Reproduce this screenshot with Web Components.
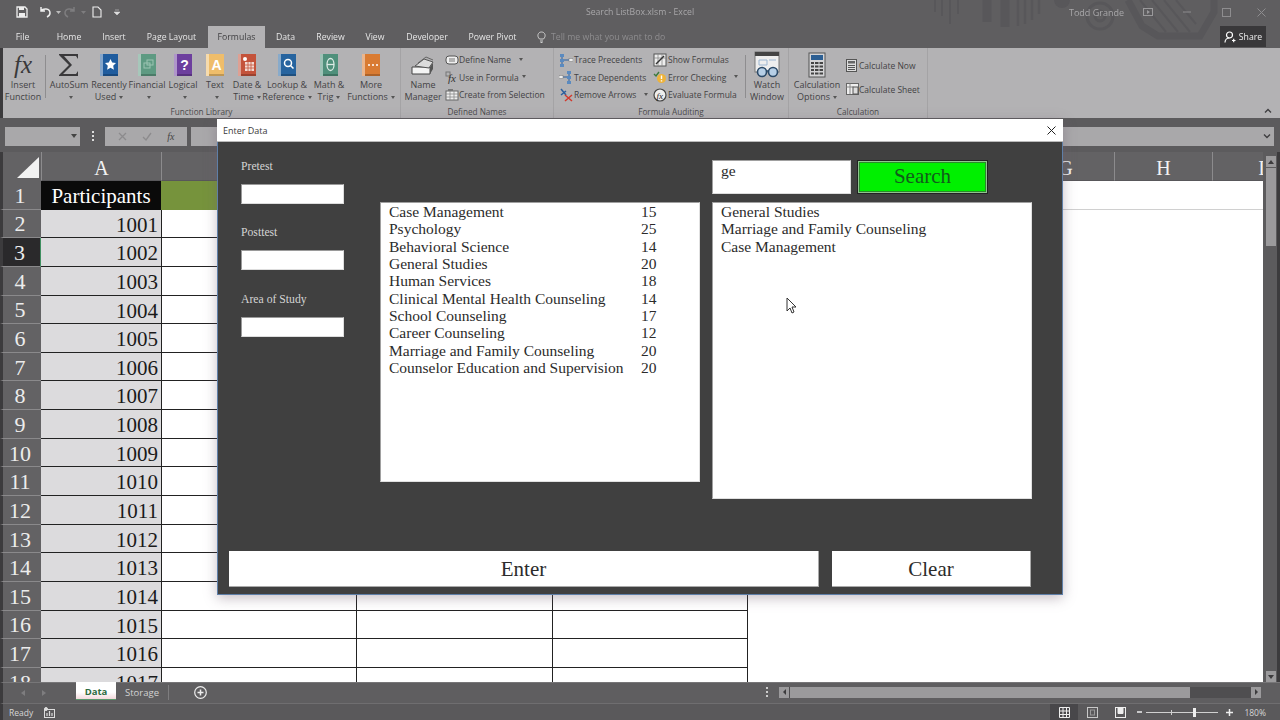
<!DOCTYPE html>
<html>
<head>
<meta charset="utf-8">
<title>Search ListBox.xlsm - Excel</title>
<style>
    html, body { margin: 0; height: 720px; overflow: hidden; }
    body {
        position: relative;
        display: flex;
        flex-direction: column;
        width: 1280px;
        background: #5c5b5d;
        font-family: "Open Sans", "Liberation Sans", sans-serif;
        filter: blur(.35px);
    }
    .cursor { position: absolute; left: 786px; top: 297px; }
</style>
</head>
<body>
<xl-titlebar></xl-titlebar>
<xl-ribbon></xl-ribbon>
<xl-formula-bar></xl-formula-bar>
<xl-sheet></xl-sheet>
<xl-sheet-tabs></xl-sheet-tabs>
<xl-status></xl-status>

<xl-dialog heading="Enter Data">
    <div slot="left">
        <xl-field label="Pretest"></xl-field>
        <xl-field label="Posttest"></xl-field>
        <xl-field label="Area of Study"></xl-field>
    </div>
    <xl-listbox slot="middle" h="280" items="Case Management|15;Psychology|25;Behavioral Science|14;General Studies|20;Human Services|18;Clinical Mental Health Counseling|14;School Counseling|17;Career Counseling|12;Marriage and Family Counseling|20;Counselor Education and Supervision|20"></xl-listbox>
    <xl-search slot="search" value="ge"></xl-search>
    <xl-listbox slot="right" h="297" items="General Studies;Marriage and Family Counseling;Case Management"></xl-listbox>
</xl-dialog>

<svg class="cursor" width="12" height="18" viewBox="0 0 12 18"><path d="M1 1v13l3-3 2 5 2-1-2-5h4z" fill="#fff" stroke="#333" stroke-width="1"/></svg>

<script>
// ---- little icon helpers ----
function book(color, inner) {
    return `<svg width="20" height="24" viewBox="0 0 20 24">
        <rect x="1" y="1" width="18" height="22" fill="${color}"/>
        <rect x="1" y="1" width="3" height="22" fill="#fff" opacity=".45"/>
        <rect x="4" y="21" width="15" height="2" fill="#000" opacity=".2"/>
        ${inner}</svg>`;
}
const T = (s, size) => `<text x="11.5" y="17" font-size="${size || 14}" font-weight="700" text-anchor="middle" fill="#fff" font-family="Liberation Sans">${s}</text>`;

const icons = {
    fx: `<span style="font:italic 25px 'Liberation Serif';color:#3a393b;line-height:26px">fx</span>`,
    sum: `<svg width="26" height="26" viewBox="0 0 26 26"><path d="M3 2h19v5l-2-3H8l8 9-9 9h13l2-3v5H3v-1l10-10L3 3z" fill="#3a393b"/></svg>`,
    recent: book('#1f5c9e', `<path d="M11.5 6l1.7 3.6 3.8.5-2.8 2.7.7 3.9-3.4-1.9-3.4 1.9.7-3.9L6 10.100l3.800-.5z" fill="#fff"/>`),
    financial: book('#5e9a82', `<rect x="7" y="10" width="6" height="5" fill="none" stroke="#9cc4b2"/><rect x="10" y="7" width="6" height="5" fill="none" stroke="#9cc4b2"/>`),
    logical: book('#6d3f9e', T('?')),
    text: book('#efbd6a', T('A')),
    date: book('#c4533b', `<circle cx="8" cy="6" r="2" fill="#fff"/><rect x="8" y="9" width="9" height="9" fill="#f2d9d2"/><path d="M8 12h9M8 15h9M11 9v9M14 9v9" stroke="#c4533b" stroke-width=".8"/>`),
    lookup: book('#27649f', `<circle cx="11" cy="10" r="3.500" fill="none" stroke="#fff" stroke-width="1.500"/><path d="M13.500 12.500l3 3" stroke="#fff" stroke-width="1.500"/>`),
    math: book('#4f907b', `<ellipse cx="11.500" cy="11.500" rx="3.500" ry="6" fill="none" stroke="#dcebe5" stroke-width="1.300"/><path d="M8 11.500h7" stroke="#dcebe5" stroke-width="1.300"/>`),
    more: book('#d97b32', `<path d="M7 12h2M11 12h2M15 12h2" stroke="#fff" stroke-width="1.600"/>`),
    nameMgr: `<svg width="26" height="24" viewBox="0 0 26 24"><path d="M2 14h18v7H2z" fill="#f4f4f4" stroke="#444"/><path d="M5 13l9-7 9 3-4 6z" fill="#dcdcdc" stroke="#555"/><path d="M20 14l3-4v6l-3 5z" fill="#555"/><path d="M8 10l8-6 7 3" fill="none" stroke="#666"/></svg>`,
    tag: `<svg width="14" height="12" viewBox="0 0 14 12"><rect x="1" y="2" width="12" height="8" rx="3" fill="#eee" stroke="#555"/><path d="M4 5h6M4 7h6" stroke="#777"/></svg>`,
    useFx: `<svg width="14" height="13" viewBox="0 0 14 13"><rect x="1" y="1" width="4" height="4" fill="none" stroke="#777"/><text x="3" y="11" font-size="11" font-style="italic" font-family="Liberation Serif" fill="#333">fx</text></svg>`,
    create: `<svg width="14" height="13" viewBox="0 0 14 13"><rect x="1" y="3" width="12" height="9" fill="#eee" stroke="#666"/><path d="M1 6h12M1 9h12M5 3v9M9 3v9" stroke="#888" stroke-width=".8"/><rect x="3" y="1" width="5" height="2" fill="#777"/></svg>`,
    tracePre: `<svg width="14" height="14" viewBox="0 0 14 14"><path d="M3 2v10M3 7h9" stroke="#2a5f9e" fill="none"/><rect x="1" y="1" width="4" height="3" fill="#5a8ac0"/><rect x="1" y="6" width="4" height="3" fill="#5a8ac0"/><rect x="1" y="11" width="4" height="3" fill="#5a8ac0"/><rect x="10" y="5.500" width="4" height="3" fill="#eee" stroke="#777" stroke-width=".5"/></svg>`,
    traceDep: `<svg width="14" height="14" viewBox="0 0 14 14"><path d="M10 2v10M3 7h7" stroke="#2a5f9e" fill="none"/><rect x="8" y="1" width="4" height="3" fill="#5a8ac0"/><rect x="8" y="6" width="4" height="3" fill="#5a8ac0"/><rect x="8" y="11" width="4" height="3" fill="#5a8ac0"/><rect x="0" y="5.500" width="4" height="3" fill="#eee" stroke="#777" stroke-width=".5"/></svg>`,
    remove: `<svg width="14" height="15" viewBox="0 0 14 15"><path d="M2 2l5 6M2 8l5-4" stroke="#2a5f9e" stroke-width="1.500"/><path d="M6 8l7 6M13 8l-7 6" stroke="#d2382c" stroke-width="1.500"/></svg>`,
    show: `<svg width="14" height="14" viewBox="0 0 14 14"><rect x="1" y="1" width="12" height="12" fill="#eee" stroke="#555"/><path d="M1 5h12M5 1v12M9 1v12" stroke="#888" stroke-width=".8"/><path d="M3 11l8-8" stroke="#333" stroke-width="1.500"/></svg>`,
    error: `<svg width="14" height="14" viewBox="0 0 14 14"><path d="M1 4l2 2 3-4" stroke="#3c7a3c" fill="none" stroke-width="1.400"/><circle cx="8.500" cy="8.500" r="4.500" fill="#eeb33a"/><path d="M8.500 5.500v3.500M8.500 10.200v1.300" stroke="#fff" stroke-width="1.400"/></svg>`,
    evaluate: `<svg width="14" height="14" viewBox="0 0 14 14"><circle cx="7" cy="7" r="6" fill="#eee" stroke="#444" stroke-width="1.200"/><text x="3.500" y="10.500" font-size="9" font-style="italic" font-family="Liberation Serif" fill="#222">fx</text></svg>`,
    watch: `<svg width="28" height="27" viewBox="0 0 28 27"><rect x="2" y="1" width="24" height="20" fill="#eee" stroke="#777"/><rect x="2" y="1" width="24" height="4" fill="#444"/><path d="M6 9h8v5H6zM16 9h7" stroke="#9cb6d2" fill="none"/><circle cx="9" cy="21" r="4.500" fill="#b7cfe6" stroke="#2c4a68" stroke-width="1.600"/><circle cx="20" cy="21" r="4.500" fill="#b7cfe6" stroke="#2c4a68" stroke-width="1.600"/><path d="M13 20h3" stroke="#2c4a68" stroke-width="1.600"/></svg>`,
    calc: `<svg width="18" height="26" viewBox="0 0 18 26"><rect x="1" y="1" width="16" height="24" fill="#d4d4d6" stroke="#555"/><rect x="3" y="3" width="12" height="5" fill="#2d5f93"/><path d="M3 11h12M3 14.500h12M3 18h12M3 21.500h12" stroke="#444" stroke-width="2"/><path d="M6.500 10v13M11 10v13" stroke="#d4d4d6"/></svg>`,
    calcNow: `<svg width="11" height="13" viewBox="0 0 11 13"><rect x=".5" y=".5" width="10" height="12" fill="#ddd" stroke="#555"/><rect x="2" y="2" width="7" height="2.500" fill="#666"/><path d="M2 6.500h7M2 8.500h7M2 10.500h7" stroke="#555"/></svg>`,
    calcSheet: `<svg width="13" height="12" viewBox="0 0 13 12"><rect x=".5" y=".5" width="12" height="11" fill="#eee" stroke="#666"/><path d="M.5 4h7M4 .5V11" stroke="#888"/><rect x="7" y="4" width="5" height="7" fill="#ddd" stroke="#555"/></svg>`
};

class XlTitlebar extends HTMLElement {
    connectedCallback() {
        const tabs = [['File', 45], ['Home', 48], ['Insert', 42], ['Page Layout', 73], ['Formulas', 57], ['Data', 41], ['Review', 49], ['View', 40], ['Developer', 64], ['Power Pivot', 67]];
        this.attachShadow({ mode: 'open' }).innerHTML = `
            <style>
                :host { display: block; position: relative; height: 48px; flex: none; background: #5f5e60; color: #e4e4e4; font-size: 8.700px; overflow: hidden; }
                .decor { position: absolute; left: 900px; top: 0; }
                .top { position: relative; display: grid; grid-template-columns: 1fr auto 1fr; align-items: center; height: 24px; }
                .qat { display: flex; align-items: center; gap: 4px; padding-left: 16px; }
                .title { color: #a8a7a9; }
                .win { display: flex; align-items: center; justify-content: flex-end; color: #a8a7a9; font-size: 9px; }
                .win svg { display: block; }
                .tabs { position: relative; display: flex; align-items: flex-end; height: 24px; }
                .tab { height: 22px; line-height: 22px; text-align: center; color: #e6e6e6; flex: none; }
                .tab.on { background: #b3b2b4; color: #3f3e40; }
                .tell { display: flex; align-items: center; gap: 5px; height: 22px; margin-left: 11px; color: #8e8d8f; }
                .share { position: absolute; left: 1220px; top: 2px; width: 46px; height: 21px; background: #39383a; color: #eee; display: flex; align-items: center; justify-content: center; gap: 3px; }
            </style>
            <svg class="decor" width="320" height="48" viewBox="0 0 320 48" fill="none" stroke="#58575a">
                <path d="M35 0v12M42 0v16M50 0v24M58 0v14" stroke-width="2"/>
                <path d="M87 0v22M105 0v27" stroke-width="9"/>
                <path d="M118 0v26M125 0v24M132 0v20M139 0v14" stroke-width="2.500"/>
                <circle cx="162" cy="0" r="8" fill="#58575a" stroke="none"/>
                <circle cx="200" cy="16" r="5" stroke-width="3"/><circle cx="200" cy="16" r="13" stroke-width="3"/>
                <path d="M228 0l14 26 16 10h42l14-24V0" stroke-width="7"/>
                <path d="M240 0l26 32M252 0l26 32M264 0l26 32M276 0l20 24" stroke-width="2"/>
            </svg>
            <div class="top">
                <div class="qat">
                    <svg width="12" height="12" viewBox="0 0 12 12"><path d="M1 1h8l2 2v8H1z" fill="none" stroke="#eee" stroke-width="1.300"/><path d="M3 1h5v3H3zM3 7h6v4H3z" fill="#eee"/></svg>
                    <svg width="14" height="12" viewBox="0 0 14 12" style="margin-left:6px"><path d="M3 1v4h4M3 5c2-3 9-3 9 2 0 2-1 3-3 4" fill="none" stroke="#eee" stroke-width="1.500"/></svg>
                    <svg width="5" height="4" viewBox="0 0 5 4"><path d="M0 1h5L2.500 4z" fill="#bbb"/></svg>
                    <svg width="14" height="12" viewBox="0 0 14 12" style="margin-left:-2px"><path d="M11 1v4H7M11 5C9 2 2 2 2 7c0 2 1 3 3 4" fill="none" stroke="#7e7d7f" stroke-width="1.500"/></svg>
                    <svg width="5" height="4" viewBox="0 0 5 4"><path d="M0 1h5L2.500 4z" fill="#7e7d7f"/></svg>
                    <svg width="10" height="12" viewBox="0 0 10 12" style="margin-left:2px"><path d="M1 1h5l3 3v7H1z" fill="none" stroke="#eee" stroke-width="1.100"/></svg>
                    <svg width="6" height="6" viewBox="0 0 6 6" style="margin-left:8px"><path d="M1 1h4M0 3h6L3 6z" fill="#ddd" stroke="#ddd" stroke-width=".5"/></svg>
                </div>
                <div class="title">Search ListBox.xlsm - Excel</div>
                <div class="win">
                    <span style="margin-right:19px">Todd Grande</span>
                    <svg width="10" height="8" viewBox="0 0 10 8" style="margin-right:30px"><rect x=".5" y=".5" width="9" height="7" fill="none" stroke="#9a999b"/><path d="M4 2l3 2-3 2z" fill="#9a999b"/></svg>
                    <svg width="8" height="2" viewBox="0 0 8 2" style="margin-right:31px"><path d="M0 1h8" stroke="#8e8d8f"/></svg>
                    <svg width="9" height="9" viewBox="0 0 9 9" style="margin-right:26px"><rect x=".5" y=".5" width="8" height="8" fill="none" stroke="#8e8d8f"/></svg>
                    <svg width="9" height="9" viewBox="0 0 9 9" style="margin-right:14px"><path d="M.5.5l8 8M8.500.5l-8 8" stroke="#8e8d8f"/></svg>
                </div>
            </div>
            <div class="tabs">
                ${tabs.map(([t, w]) => `<div class="tab ${t == 'Formulas' ? 'on' : ''}" style="width:${w}px">${t}</div>`).join('')}
                <div class="tell">
                    <svg width="9" height="12" viewBox="0 0 9 12" fill="none" stroke="#cfcfcf"><path d="M2.500 8C-.5 5 1 1 4.500 1S9.500 5 6.500 8zM3 10h3M3.500 11.500h2"/></svg>
                    <span>Tell me what you want to do</span>
                </div>
                <div class="share">
                    <svg width="12" height="12" viewBox="0 0 12 12" fill="none" stroke="#fff" stroke-width="1.200"><circle cx="5.500" cy="4" r="3"/><path d="M1 11.500c0-3 2-4.500 4.500-4.500M8 9.500h3.500M9.700 7.800v3.500"/></svg>
                    <span>Share</span>
                </div>
            </div>
        `;
    }
}

class XlRibbon extends HTMLElement {
    connectedCallback() {
        // large button: [label line 1, label line 2, icon, width, marginLeft]
        const big = (a, b, icon, w, ml) => `
            <div class="big" style="width:${w}px;margin-left:${ml || 0}px">
                <div class="ic">${icon}</div><div class="lb">${a}</div><div class="lb">${b}</div>
            </div>`;
        const arrow = `<i class="ar"></i>`;
        const small = (icon, txt, extra) => `<div class="sm"><span class="si">${icon}</span><span>${txt}</span>${extra || ''}</div>`;
        this.attachShadow({ mode: 'open' }).innerHTML = `
            <style>
                :host { display: block; height: 70px; flex: none; background: #b3b2b4; color: #434244; font-size: 9px; border-left: 3px solid #3c3b3d; box-sizing: border-box; position: relative; }
                .wrap { display: flex; height: 70px; }
                .group { display: flex; flex-direction: column; flex: none; border-right: 1px solid #a4a3a5; box-sizing: border-box; height: 70px; }
                .items { display: flex; height: 58px; flex: none; }
                .cap { text-align: center; height: 12px; line-height: 12px; font-size: 8.200px; color: #4a494b; flex: none; }
                .big { flex: none; display: flex; flex-direction: column; align-items: center; white-space: nowrap; }
                .ic { height: 31px; display: flex; align-items: center; justify-content: center; padding-top: 2px; box-sizing: border-box; }
                .lb { height: 12px; line-height: 12px; }
                .ar { display: inline-block; width: 0; height: 0; border: 2px solid transparent; border-top: 3px solid #555; border-bottom: 0; margin: 0 0 1px 3px; vertical-align: middle; }
                .sep { flex: none; width: 1px; height: 43px; margin: 7px 3px 0 2px; background: #8e8d8f; }
                .col { flex: none; display: flex; flex-direction: column; padding-top: 3px; font-size: 8.500px; }
                .sm { display: flex; align-items: center; height: 17.500px; white-space: nowrap; }
                .si { width: 14px; flex: none; display: flex; align-items: center; }
                .col.wide .si { width: 15px; }
                .col2 .sm { height: 24px; }
                .col2 { padding-top: 5px; }
                .col2 .si { width: 13px; }
                .chev { position: absolute; left: 1261px; top: 60px; }
            </style>
            <div class="wrap">
                <div class="group" style="width:398px">
                    <div class="items">
                        ${big('Insert', 'Function', icons.fx, 40)}
                        <div class="sep"></div>
                        ${big('AutoSum', arrow, icons.sum, 40)}
                        ${big('Recently', 'Used' + arrow, icons.recent, 40)}
                        ${big('Financial', arrow, icons.financial, 36)}
                        ${big('Logical', arrow, icons.logical, 36)}
                        ${big('Text', arrow, icons.text, 28)}
                        ${big('Date &amp;', 'Time' + arrow, icons.date, 36)}
                        ${big('Lookup &amp;', 'Reference' + arrow, icons.lookup, 44)}
                        ${big('Math &amp;', 'Trig' + arrow, icons.math, 40)}
                        ${big('More', 'Functions' + arrow, icons.more, 44)}
                    </div>
                    <div class="cap">Function Library</div>
                </div>
                <div class="group" style="width:153px">
                    <div class="items">
                        ${big('Name', 'Manager', icons.nameMgr, 42, 1)}
                        <div class="col" style="margin-left:1px">
                            ${small(icons.tag, 'Define Name', '<i class="ar" style="margin-left:8px"></i>')}
                            ${small(icons.useFx, 'Use in Formula', arrow)}
                            ${small(icons.create, 'Create from Selection')}
                        </div>
                    </div>
                    <div class="cap">Defined Names</div>
                </div>
                <div class="group" style="width:235px">
                    <div class="items">
                        <div class="col wide" style="margin-left:5px;width:94px">
                            ${small(icons.tracePre, 'Trace Precedents')}
                            ${small(icons.traceDep, 'Trace Dependents')}
                            ${small(icons.remove, 'Remove Arrows', '<i class="ar" style="margin-left:8px"></i>')}
                        </div>
                        <div class="col wide" style="width:92px">
                            ${small(icons.show, 'Show Formulas')}
                            ${small(icons.error, 'Error Checking', '<i class="ar" style="margin-left:8px"></i>')}
                            ${small(icons.evaluate, 'Evaluate Formula')}
                        </div>
                        <div class="sep" style="margin:7px 0 0 0"></div>
                        ${big('Watch', 'Window', icons.watch, 42)}
                    </div>
                    <div class="cap">Formula Auditing</div>
                </div>
                <div class="group" style="width:139px">
                    <div class="items">
                        ${big('Calculation', 'Options' + arrow, icons.calc, 54, 1)}
                        <div class="col col2" style="margin-left:2px">
                            ${small(icons.calcNow, 'Calculate Now')}
                            ${small(icons.calcSheet, 'Calculate Sheet')}
                        </div>
                    </div>
                    <div class="cap">Calculation</div>
                </div>
            </div>
            <svg class="chev" width="8" height="6" viewBox="0 0 8 6"><path d="M1 4.500l3-3 3 3" fill="none" stroke="#3f3e40" stroke-width="1.400"/></svg>
        `;
    }
}

class XlFormulaBar extends HTMLElement {
    connectedCallback() {
        this.attachShadow({ mode: 'open' }).innerHTML = `
            <style>
                :host { display: flex; align-items: center; height: 34px; padding: 8px 6px 6px 5px; box-sizing: border-box; background: #5c5b5d; flex: none; }
                .name { width: 75px; height: 19px; background: #a9a8aa; display: flex; align-items: center; justify-content: flex-end; padding-right: 3px; box-sizing: border-box; }
                .dots { width: 25px; text-align: center; color: #ccc; line-height: 19px; display: flex; justify-content: center; }
                .fx { width: 82px; height: 19px; background: #a9a8aa; display: flex; align-items: center; justify-content: space-around; box-sizing: border-box; padding: 0 5px; }
                .input { flex: 1; height: 19px; margin-left: 4px; background: #a9a8aa; display: flex; align-items: center; justify-content: flex-end; padding-right: 3px; box-sizing: border-box; }
            </style>
            <div class="name"><svg width="6" height="4" viewBox="0 0 6 4"><path d="M0 0h6L3 4z" fill="#444"/></svg></div>
            <div class="dots"><svg width="2" height="10" viewBox="0 0 2 10"><path d="M0 0h2v2H0zM0 4h2v2H0zM0 8h2v2H0z" fill="#ddd"/></svg></div>
            <div class="fx">
                <svg width="9" height="9" viewBox="0 0 9 9"><path d="M1 1l7 7M8 1L1 8" stroke="#8c8b8d" stroke-width="1.300"/></svg>
                <svg width="10" height="9" viewBox="0 0 10 9"><path d="M1 5l3 3 5-7" fill="none" stroke="#8c8b8d" stroke-width="1.300"/></svg>
                <span style="font:italic 10px 'Liberation Serif';color:#444">fx</span>
            </div>
            <div class="input"><svg width="8" height="6" viewBox="0 0 8 6"><path d="M1 1.500l3 3 3-3" fill="none" stroke="#3f3e40" stroke-width="1.400"/></svg></div>
        `;
    }
}

class XlSheet extends HTMLElement {
    connectedCallback() {
        // B to F sit behind the dialog in the picture
        const letters = ['A', '', '', '', '', '', 'G', 'H', 'I'];
        const tail = cls => Array(5).fill(`<div class="c plain ${cls}"></div>`).join('');
        let rows = '';
        for (let r = 1; r <= 18; r++) {
            const cls = r == 3 ? 'rh cur' : 'rh';
            rows += `<div class="${cls}">${r}</div>`;
            if (r == 1) {
                rows += `<div class="c head">Participants</div>
                         <div class="c green"></div><div class="c green"></div><div class="c green"></div>
                         ${tail('line')}`;
            } else {
                rows += `<div class="c id">${999 + r}</div><div class="c b"></div><div class="c b"></div><div class="c b"></div>
                         <div class="c plain first"></div>${Array(4).fill('<div class="c plain"></div>').join('')}`;
            }
        }
        this.attachShadow({ mode: 'open' }).innerHTML = `
            <style>
                :host { display: flex; height: 530px; flex: none; overflow: hidden; font-family: "Liberation Serif", serif; background: #5c5b5d; }
                .grid { display: grid; grid-template-columns: 41px 120px 195px 196px 195px 171px 98px 98px 98px 98px; grid-template-rows: 29px repeat(18, 28.650px); flex: none; width: 1263px; overflow: hidden; }
                .corner { background: #636264; display: flex; align-items: flex-end; justify-content: flex-end; padding: 0 2px 3px 0; box-sizing: border-box; border-left: 3px solid #3c3b3d; }
                .ch { background: #636264; color: #f2f2f2; font-size: 20px; display: flex; align-items: center; justify-content: center; border-left: 1px solid #8c8b8d; box-sizing: border-box; border-bottom: 1px solid #58575a; padding-top: 5px; }
                .rh { background: #636264; color: #ececec; font-size: 22px; display: flex; align-items: center; justify-content: center; border-bottom: 1px solid #8a898b; border-left: 3px solid #3c3b3d; box-sizing: border-box; padding: 2px 4px 0 0; }
                .rh.cur { background: #2a292b; border-right: 1px solid #3f8f60; }
                .c { box-sizing: border-box; min-width: 0; }
                .head { background: #0a0a0a; color: #fff; font-size: 21px; text-align: center; line-height: 30px; }
                .green { background: #76933c; }
                .id { background: #dcdbdd; color: #1a1a1a; font-size: 21px; text-align: right; padding-right: 3px; line-height: 31px; border-bottom: 1px solid #222; }
                .b { background: #fff; border-bottom: 1px solid #222; border-left: 1px solid #222; }
                .plain { background: #fff; }
                .first { border-left: 1px solid #222; }
                .line { border-bottom: 1px solid #d0d0d0; }
                .vbar { flex: 1; display: flex; flex-direction: column; padding: 4px 0 0 3px; align-items: flex-start; border-right: 3px solid #3c3b3d; }
                .btn { width: 10px; height: 11px; background: #9b9a9c; display: flex; align-items: center; justify-content: center; flex: none; }
                .thumb { width: 10px; height: 78px; background: #9b9a9c; flex: none; margin-top: 1px; }
            </style>
            <div class="grid">
                <div class="corner"><svg width="22" height="21" viewBox="0 0 22 21"><path d="M22 0v21H0z" fill="#f2f2f2"/></svg></div>
                ${letters.map(l => `<div class="ch">${l}</div>`).join('')}
                ${rows}
            </div>
            <div class="vbar">
                <div class="btn"><svg width="6" height="4" viewBox="0 0 6 4"><path d="M3 0l3 4H0z" fill="#3c3b3d"/></svg></div>
                <div class="thumb"></div>
                <div style="flex:1"></div>
                <div class="btn"><svg width="6" height="4" viewBox="0 0 6 4"><path d="M0 0h6L3 4z" fill="#3c3b3d"/></svg></div>
            </div>
        `;
    }
}

class XlSheetTabs extends HTMLElement {
    connectedCallback() {
        this.attachShadow({ mode: 'open' }).innerHTML = `
            <style>
                :host { display: flex; align-items: center; height: 21px; flex: none; background: #5f5e60; color: #d2d2d2; font-size: 9.500px; border-top: 1px solid #777678; box-sizing: border-box; border-left: 3px solid #3c3b3d; }
                .nav { width: 73px; display: flex; gap: 17px; padding-left: 18px; box-sizing: border-box; flex: none; }
                .data { width: 40px; height: 18px; margin-top: -1px; align-self: flex-start; background: linear-gradient(#fff 60%, #f3d8dc); color: #2f6b3f; font-weight: 700; text-align: center; line-height: 19px; flex: none; border-bottom: 1px solid #5b9a6c; box-sizing: border-box; }
                .st { width: 52px; text-align: center; flex: none; border-right: 1px solid #7e7d7f; height: 15px; line-height: 15px; margin-top: -2px; }
                .add { margin-left: 25px; flex: none; display: flex; margin-top: -2px; }
                .more { margin-left: 559px; flex: none; display: flex; margin-top: -2px; }
                .scroll { margin-left: 11px; width: 482px; height: 11px; background: #4f4e50; display: flex; flex: none; margin-top: -2px; }
                .sb { width: 10px; background: #9b9a9c; display: flex; align-items: center; justify-content: center; flex: none; }
                .th { width: 400px; margin-left: 1px; background: #9b9a9c; flex: none; }
            </style>
            <div class="nav">
                <svg width="4" height="6" viewBox="0 0 4 6"><path d="M4 0v6L0 3z" fill="#7e7d7f"/></svg>
                <svg width="4" height="6" viewBox="0 0 4 6"><path d="M0 0v6l4-3z" fill="#7e7d7f"/></svg>
            </div>
            <div class="data">Data</div>
            <div class="st">Storage</div>
            <div class="add"><svg width="13" height="13" viewBox="0 0 13 13" fill="none" stroke="#eee"><circle cx="6.500" cy="6.500" r="5.800" stroke-width="1.200"/><path d="M3.500 6.500h6M6.500 3.500v6" stroke-width="1.500"/></svg></div>
            <div class="more"><svg width="2" height="10" viewBox="0 0 2 10"><path d="M0 0h2v2H0zM0 4h2v2H0zM0 8h2v2H0z" fill="#ccc"/></svg></div>
            <div class="scroll">
                <div class="sb"><svg width="3" height="6" viewBox="0 0 3 6"><path d="M3 0v6L0 3z" fill="#3c3b3d"/></svg></div>
                <div class="th"></div>
                <div style="flex:1"></div>
                <div class="sb"><svg width="3" height="6" viewBox="0 0 3 6"><path d="M0 0v6l3-3z" fill="#3c3b3d"/></svg></div>
            </div>
        `;
    }
}

class XlStatus extends HTMLElement {
    connectedCallback() {
        this.attachShadow({ mode: 'open' }).innerHTML = `
            <style>
                :host { display: flex; align-items: center; height: 17px; flex: none; background: #5a595b; color: #d6d6d6; font-size: 8.500px; border-top: 1px solid #6f6e70; box-sizing: border-box; padding-left: 6px; border-left: 3px solid #3c3b3d; }
                .rec { margin-left: 11px; display: flex; }
                .views { margin-left: auto; display: flex; align-items: center; height: 16px; }
                .v { width: 28px; height: 16px; display: flex; align-items: center; justify-content: center; }
                .v.on { background: #48474a; }
                .zoom { display: flex; align-items: center; margin-left: 3px; }
                .track { width: 72px; height: 1px; background: #d0d0d0; margin: 0 8px 0 3px; position: relative; }
                .track b { position: absolute; left: 25px; top: -2px; width: 1px; height: 5px; background: #d0d0d0; }
                .track i { position: absolute; left: 47px; top: -4px; width: 3px; height: 9px; background: #eee; }
                .pct { margin: 0 14px 0 11px; }
            </style>
            <span>Ready</span>
            <div class="rec"><svg width="11" height="11" viewBox="0 0 11 11" fill="none" stroke="#ddd"><rect x=".5" y="2.500" width="10" height="8"/><path d="M3 9V6M5.500 9V4M8 9V6" stroke-width="1.200"/><circle cx="2" cy="2" r="1.500" fill="#ddd"/></svg></div>
            <div class="views">
                <div class="v on"><svg width="11" height="11" viewBox="0 0 11 11" fill="none" stroke="#eee"><path d="M.5.500h10v10H.500zM4 .5v10M7.500.5v10M.5 4h10M.5 7.500h10"/></svg></div>
                <div class="v"><svg width="11" height="11" viewBox="0 0 11 11" fill="none" stroke="#c8c8c8"><rect x=".5" y=".5" width="10" height="10"/><rect x="3.500" y="3" width="4" height="5" stroke="#999"/></svg></div>
                <div class="v"><svg width="11" height="11" viewBox="0 0 11 11" fill="none" stroke="#eee"><rect x=".5" y=".5" width="10" height="10"/><path d="M3 1h5v5.500H3z" fill="#eee"/></svg></div>
            </div>
            <div class="zoom">
                <svg width="6" height="2" viewBox="0 0 6 2"><path d="M0 1h5" stroke="#eee" stroke-width="1.500"/></svg>
                <div class="track"><b></b><i></i></div>
                <svg width="7" height="7" viewBox="0 0 7 7"><path d="M0 3.500h7M3.500 0v7" stroke="#eee" stroke-width="1.500"/></svg>
            </div>
            <span class="pct">180%</span>
        `;
    }
}

class XlDialog extends HTMLElement {
    connectedCallback() {
        const heading = this.getAttribute('heading') || '';
        this.attachShadow({ mode: 'open' }).innerHTML = `
            <style>
                :host { position: absolute; left: 217px; top: 119px; width: 846px; height: 476px; box-sizing: border-box; display: flex; flex-direction: column; box-shadow: 0 3px 12px rgba(110,90,110,.4); background: #404040; }
                .bar { height: 23px; flex: none; background: #fff; display: flex; align-items: center; justify-content: space-between; padding: 0 7px 0 6px; color: #3a3a3a; font: 9px "Open Sans", sans-serif; border-bottom: 1px solid #bbb; box-sizing: border-box; }
                .body { flex: 1; display: flex; flex-direction: column; font-family: "Liberation Serif", serif; border: 1px solid #5f7fa8; border-top: 0; }
                .top { display: flex; flex: 1; }
                .left { width: 103px; margin-left: 23px; padding-top: 18px; flex: none; }
                .mid { margin-left: 36px; padding-top: 60px; flex: none; }
                .right { margin-left: 12px; padding-top: 18px; flex: none; }
                .right ::slotted(xl-search) { margin-bottom: 8px; }
                .bottom { display: flex; gap: 13px; padding: 0 0 7px 11px; }
            </style>
            <div class="bar">
                <span>${heading}</span>
                <svg width="9" height="9" viewBox="0 0 9 9"><path d="M.5.5l8 8M8.500.5l-8 8" stroke="#222"/></svg>
            </div>
            <div class="body">
                <div class="top">
                    <div class="left"><slot name="left"></slot></div>
                    <div class="mid"><slot name="middle"></slot></div>
                    <div class="right"><slot name="search"></slot><slot name="right"></slot></div>
                </div>
                <div class="bottom">
                    <xl-button w="590">Enter</xl-button>
                    <xl-button w="199">Clear</xl-button>
                </div>
            </div>
        `;
    }
}

class XlField extends HTMLElement {
    connectedCallback() {
        this.attachShadow({ mode: 'open' }).innerHTML = `
            <style>
                :host { display: block; height: 66.300px; font-family: "Liberation Serif", serif; }
                .l { color: #d4d4d4; font-size: 11.700px; line-height: 14px; height: 24px; }
                .i { height: 20px; background: #fff; border: 1px solid; border-color: #9a9a9a #ddd #ddd #9a9a9a; box-sizing: border-box; }
            </style>
            <div class="l">${this.getAttribute('label')}</div>
            <div class="i"></div>
        `;
    }
}

class XlListbox extends HTMLElement {
    connectedCallback() {
        const items = this.getAttribute('items').split(';').map(s => s.split('|'));
        this.attachShadow({ mode: 'open' }).innerHTML = `
            <style>
                :host { display: block; width: 320px; height: ${this.getAttribute('h')}px; box-sizing: border-box; background: #fff; border: 1px solid; border-color: #a0a0a0 #e0e0e0 #e0e0e0 #a0a0a0; padding: 0 0 0 8px; font: 15.500px "Liberation Serif", serif; color: #2b2b2b; }
                .row { display: grid; grid-template-columns: 252px auto; height: 17.330px; line-height: 17.330px; white-space: nowrap; }
            </style>
            ${items.map(([a, b]) => `<div class="row"><span>${a}</span><span>${b || ''}</span></div>`).join('')}
        `;
    }
}

class XlSearch extends HTMLElement {
    connectedCallback() {
        this.attachShadow({ mode: 'open' }).innerHTML = `
            <style>
                :host { display: flex; gap: 6px; height: 34px; font-family: "Liberation Serif", serif; }
                .box { width: 139px; background: #fff; border: 1px solid; border-color: #a0a0a0 #ddd #ddd #a0a0a0; box-sizing: border-box; padding: 1px 0 0 8px; font-size: 15.500px; line-height: 18px; color: #2b2b2b; }
                .go { width: 131px; background: #00f000; border: 1px solid #222; box-sizing: border-box; text-align: center; font-size: 21px; line-height: 31px; color: #125c1c; box-shadow: inset 0 0 0 1px #8fc48f, inset 0 0 0 2px #2a8a2a; }
            </style>
            <div class="box">${this.getAttribute('value')}</div>
            <div class="go">Search</div>
        `;
    }
}

class XlButton extends HTMLElement {
    connectedCallback() {
        this.attachShadow({ mode: 'open' }).innerHTML = `
            <style>
                :host { display: block; width: ${this.getAttribute('w')}px; height: 36px; background: #fff; border-bottom: 1px solid #aaa; border-right: 1px solid #aaa; box-sizing: border-box; text-align: center; font-size: 21px; line-height: 36px; color: #2b2b2b; flex: none; }
            </style>
            <slot></slot>
        `;
    }
}

customElements.define('xl-titlebar', XlTitlebar);
customElements.define('xl-ribbon', XlRibbon);
customElements.define('xl-formula-bar', XlFormulaBar);
customElements.define('xl-sheet', XlSheet);
customElements.define('xl-sheet-tabs', XlSheetTabs);
customElements.define('xl-status', XlStatus);
customElements.define('xl-dialog', XlDialog);
customElements.define('xl-field', XlField);
customElements.define('xl-listbox', XlListbox);
customElements.define('xl-search', XlSearch);
customElements.define('xl-button', XlButton);
</script>
</body>
</html>
